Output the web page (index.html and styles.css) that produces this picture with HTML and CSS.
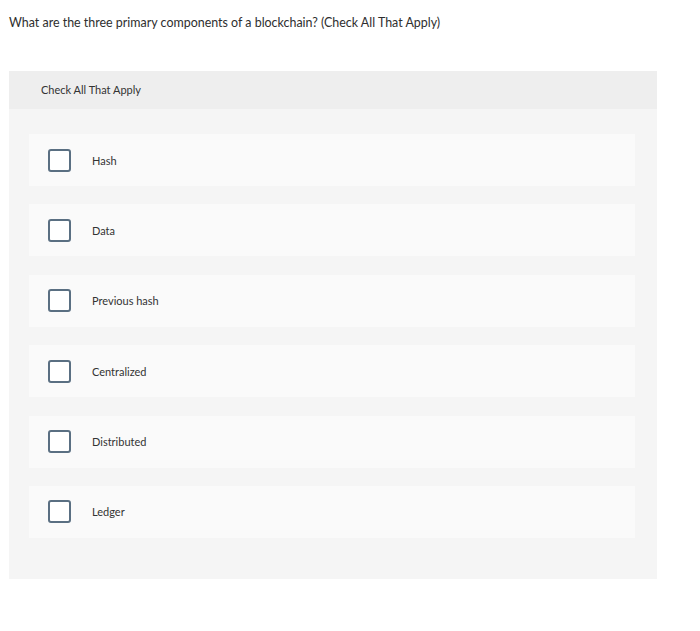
FILE: index.html
```html
<!DOCTYPE html>
<html>
<head>
<meta charset="utf-8">
<link rel="stylesheet" href="styles.css">
</head>
<body>
<p class="question">What are the three primary components of a blockchain? (Check All That Apply)</p>
<div class="panel">
  <div class="panel-head">Check All That Apply</div>
  <div class="options">
    <label class="option"><span class="box"></span><span class="label">Hash</span></label>
    <label class="option"><span class="box"></span><span class="label">Data</span></label>
    <label class="option"><span class="box"></span><span class="label">Previous hash</span></label>
    <label class="option"><span class="box"></span><span class="label">Centralized</span></label>
    <label class="option"><span class="box"></span><span class="label">Distributed</span></label>
    <label class="option"><span class="box"></span><span class="label">Ledger</span></label>
  </div>
</div>
</body>
</html>
```
FILE: styles.css
```css
body {
  margin: 0;
  background: #ffffff;
  font-family: Lato, "Open Sans", sans-serif;
  color: #333333;
}
.question {
  margin: 0;
  padding: 14px 9px 0 9px;
  font-size: 12.45px;
  line-height: 18px;
  color: #2e2e2e;
}
.panel {
  margin: 39px 43px 0 9px;
  width: 648px;
  background: #f5f5f5;
  padding-bottom: 41px;
}
.panel-head {
  height: 38px;
  line-height: 38px;
  background: #eeeeee;
  padding-left: 32px;
  font-size: 11px;
  color: #333333;
}
.options {
  display: flex;
  flex-direction: column;
  gap: 18.4px;
  padding: 25px 22px 0 20px;
}
.option {
  display: flex;
  align-items: center;
  height: 52px;
  background: #fafafa;
  padding-left: 19px;
}
.box {
  width: 19px;
  height: 19px;
  border: 2px solid #5a6f82;
  border-radius: 3px;
  background: #ffffff;
}
.label {
  margin-left: 21px;
  font-size: 11px;
  color: #333333;
}
```
